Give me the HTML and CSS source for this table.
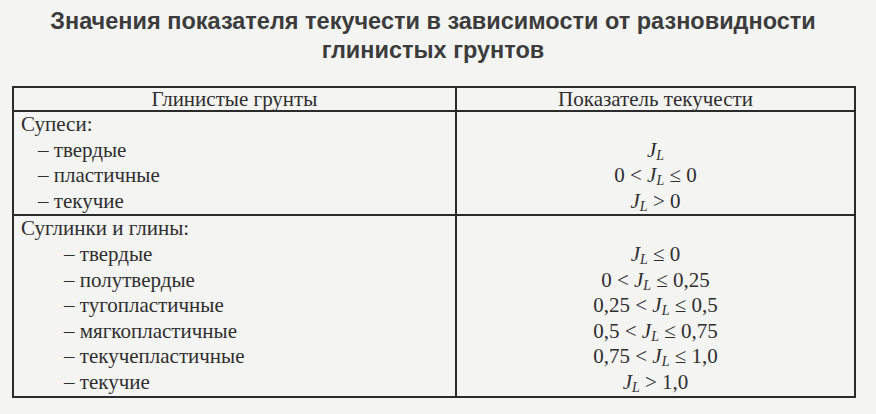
FILE: index.html
```html
<!DOCTYPE html>
<html lang="ru">
<head>
<meta charset="utf-8">
<link rel="stylesheet" href="styles.css">
</head>
<body>
<div class="page">
  <h1 class="title">Значения показателя текучести в зависимости от разновидности<br>глинистых грунтов</h1>
  <table class="soil">
    <thead>
      <tr><th class="c1">Глинистые грунты</th><th class="c2">Показатель текучести</th></tr>
    </thead>
    <tbody>
      <tr>
        <td class="c1">
          <div class="ln">Супеси:</div>
          <div class="ln sub1">– твердые</div>
          <div class="ln sub1">– пластичные</div>
          <div class="ln sub1">– текучие</div>
        </td>
        <td class="c2">
          <div class="ln">&nbsp;</div>
          <div class="ln"><i>J<sub>L</sub></i></div>
          <div class="ln">0 &lt; <i>J<sub>L</sub></i> ≤ 0</div>
          <div class="ln"><i>J<sub>L</sub></i> &gt; 0</div>
        </td>
      </tr>
      <tr>
        <td class="c1">
          <div class="ln">Суглинки и глины:</div>
          <div class="ln sub2">– твердые</div>
          <div class="ln sub2">– полутвердые</div>
          <div class="ln sub2">– тугопластичные</div>
          <div class="ln sub2">– мягкопластичные</div>
          <div class="ln sub2">– текучепластичные</div>
          <div class="ln sub2">– текучие</div>
        </td>
        <td class="c2">
          <div class="ln">&nbsp;</div>
          <div class="ln"><i>J<sub>L</sub></i> ≤ 0</div>
          <div class="ln">0 &lt; <i>J<sub>L</sub></i> ≤ 0,25</div>
          <div class="ln">0,25 &lt; <i>J<sub>L</sub></i> ≤ 0,5</div>
          <div class="ln">0,5 &lt; <i>J<sub>L</sub></i> ≤ 0,75</div>
          <div class="ln">0,75 &lt; <i>J<sub>L</sub></i> ≤ 1,0</div>
          <div class="ln"><i>J<sub>L</sub></i> &gt; 1,0</div>
        </td>
      </tr>
    </tbody>
  </table>
</div>
</body>
</html>
```

FILE: styles.css
```css
html, body {
  margin: 0;
  padding: 0;
}
body {
  background: #f4f4f3;
  width: 876px;
  height: 414px;
  overflow: hidden;
}
.page {
  padding: 7px 0 0 12px;
}
.title {
  margin: 0 0 21px 0;
  width: 842px;
  text-align: center;
  font-family: "Liberation Sans", Arial, sans-serif;
  font-weight: bold;
  font-size: 23.5px;
  line-height: 29px;
  color: #3c3c3c;
}
.soil {
  border-collapse: collapse;
  width: 844px;
  font-family: "Liberation Serif", "Times New Roman", serif;
  font-size: 21px;
  color: #2e2e2e;
  table-layout: fixed;
}
.soil th, .soil td {
  border: 2px solid #2b2b2b;
  padding: 0;
  vertical-align: top;
}
.soil th {
  font-weight: normal;
  height: 22px;
  line-height: 22px;
  text-align: center;
}
.soil .c1 { width: 441px; }
.soil td.c1 { text-align: left; padding-left: 7px; }
.soil td.c2 { text-align: center; }
.ln {
  height: 25.6px;
  line-height: 25.6px;
  white-space: nowrap;
}
.sub1 { padding-left: 17px; }
.sub2 { padding-left: 43px; }
.soil i sub {
  font-size: 14px;
  vertical-align: -3px;
  line-height: 0;
}
```
